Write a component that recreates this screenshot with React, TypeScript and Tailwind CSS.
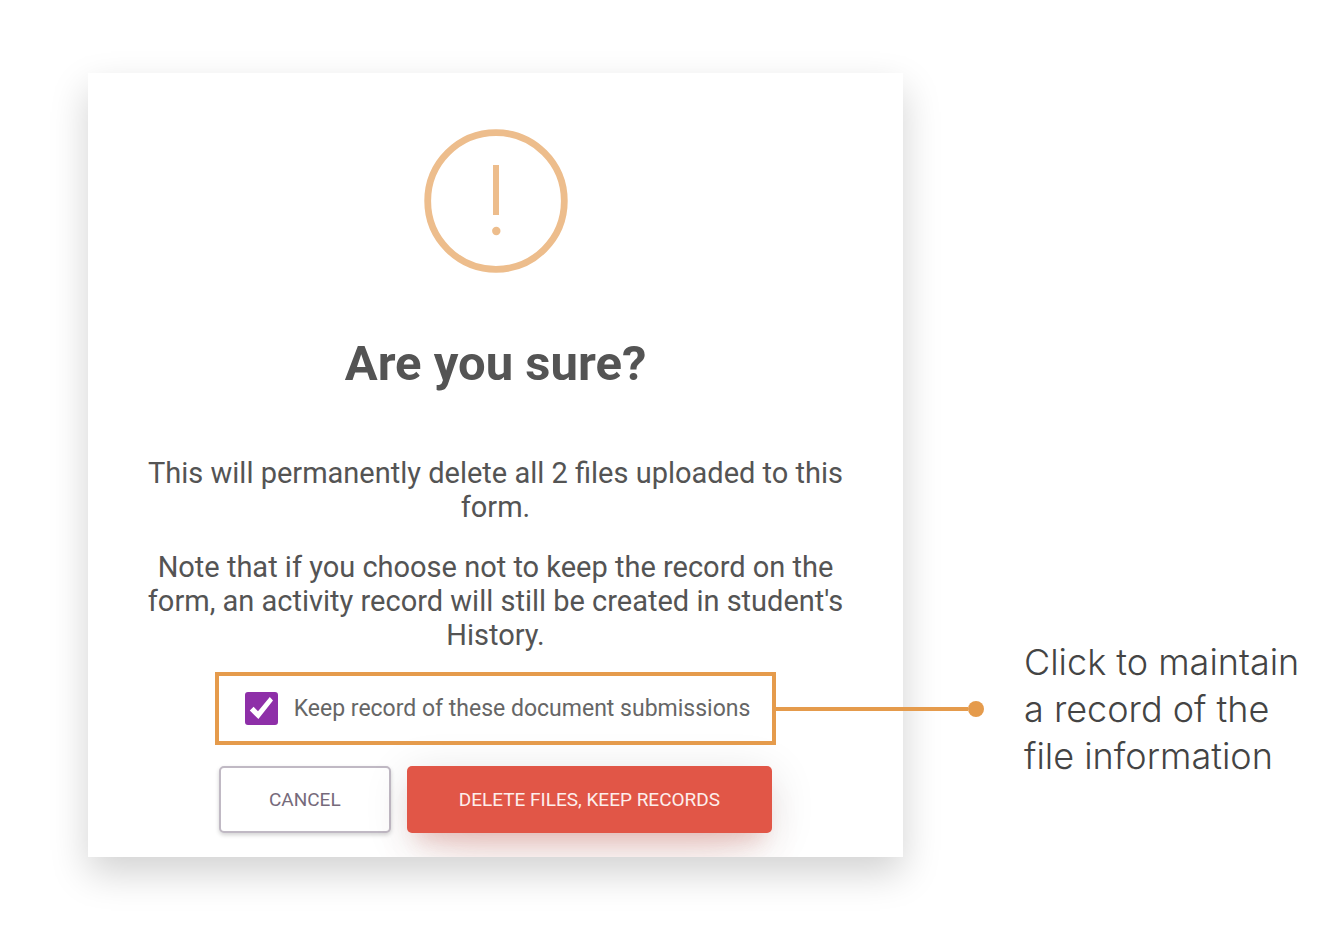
import { useState } from "react";

function WarningIcon() {
  return (
    <svg viewBox="0 0 144 144" className="size-36" fill="none" aria-hidden="true">
      <circle cx="72" cy="72" r="68.3" stroke="#edbd8c" strokeWidth="6.8" />
      <rect x="69" y="36" width="6" height="50" fill="#edbd8c" />
      <circle cx="72.3" cy="102" r="4.2" fill="#edbd8c" />
    </svg>
  );
}

function Connector() {
  return (
    <span className="absolute left-full top-1/2 flex w-[212px] -translate-y-1/2 items-center" aria-hidden="true">
      <span className="h-1 flex-1 bg-[#e59b4c]" />
      <span className="size-4 rounded-full bg-[#e59b4c]" />
    </span>
  );
}

export default function App() {
  const [keep, setKeep] = useState(true);

  return (
    <main className="flex min-h-screen items-end bg-white pb-[71px] pl-[88px] pt-[73px] font-['Roboto',sans-serif]">
      <section
        role="dialog"
        aria-labelledby="confirm-title"
        className="flex w-[815px] shrink-0 flex-col items-center overflow-y-clip bg-white px-[50px] pb-6 pt-14 text-[#545454] shadow-[0_16px_36px_rgba(0,0,0,0.18)]"
      >
        <WarningIcon />
        <h1 id="confirm-title" className="mt-[61px] text-[49px] font-bold leading-[60px]">
          Are you sure?
        </h1>
        <div className="mt-[62px] flex flex-col gap-[26px] text-center text-[29px] leading-[34px]">
          <p>This will permanently delete all 2 files uploaded to this form.</p>
          <p>
            Note that if you choose not to keep the record on the form, an activity record will still be created in
            student's History.
          </p>
        </div>
        <div className="relative z-10 mt-5 border-4 border-[#e59b4c] py-4 pl-[26px] pr-[22px]">
          <label className="flex cursor-pointer items-center gap-4 text-[23px] leading-[33px] text-[#666666]">
            <span className="relative flex size-[33px]">
              <input
                type="checkbox"
                checked={keep}
                onChange={(event) => setKeep(event.target.checked)}
                className="peer size-full appearance-none rounded-[3px] border-2 border-[#8e2fa8] checked:bg-[#8e2fa8]"
              />
              <svg
                viewBox="0 0 33 33"
                className="pointer-events-none absolute inset-0 hidden size-full peer-checked:block"
                fill="#ffffff"
                aria-hidden="true"
              >
                <path d="M4.8 18.6 8.6 14.8 13 19.2 24.8 5 28 8.6 13.4 27Z" />
              </svg>
            </span>
            Keep record of these document submissions
          </label>
          <Connector />
        </div>
        <div className="mt-[21px] flex gap-4 text-[19px] leading-[27px]">
          <button
            type="button"
            className="rounded-[5px] border-2 border-[#c0b9c4] bg-white px-12 py-[18px] text-[#766a7b] shadow-[0_2px_4px_rgba(0,0,0,0.18)]"
          >
            CANCEL
          </button>
          <button
            type="button"
            className="rounded-[5px] bg-[#e15647] px-[52px] py-5 text-[#fdeeec] shadow-[0_28px_52px_-24px_rgba(225,86,71,0.42),0_8px_46px_rgba(0,0,0,0.12),0_16px_20px_-10px_rgba(225,86,71,0.2)]"
          >
            DELETE FILES, KEEP RECORDS
          </button>
        </div>
      </section>
      <p className="mb-[77px] ml-[121px] text-[36px] font-light leading-[47px] text-[#444444] font-['Inter',sans-serif]">
        Click to maintain
        <br />
        a record of the
        <br />
        file information
      </p>
    </main>
  );
}
